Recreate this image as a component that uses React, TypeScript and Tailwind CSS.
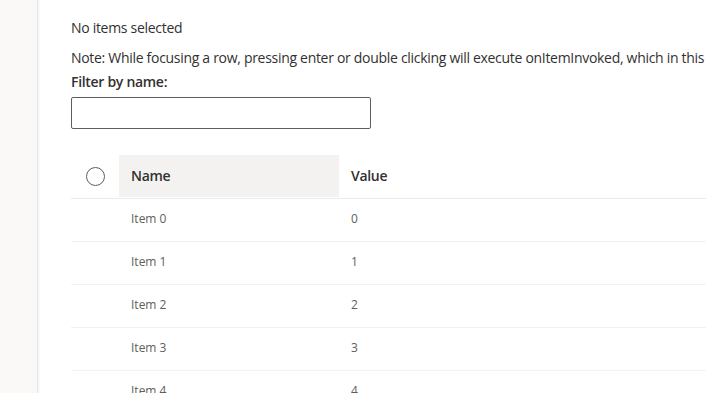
const items = [0, 1, 2, 3, 4].map((i) => ({ name: `Item ${i}`, value: i }));

export default function App() {
  return (
    <div
      className="flex h-[393px] w-[706px] overflow-hidden bg-white text-[#323130]"
      style={{ fontFamily: '"Segoe UI", "Open Sans", "Noto Sans", sans-serif' }}
    >
      {/* side rail */}
      <div className="w-[38px] shrink-0 bg-[#faf9f8] border-r border-[#e8e6e4] shadow-[1px_0_2px_rgba(0,0,0,0.06)]" />

      <div className="flex-1 min-w-0 pl-[33px] pt-[18px] tracking-[-0.3px]">
        <div className="text-[14px] leading-[20px]">No items selected</div>
        <div className="mt-[10px] text-[14px] leading-[20px] whitespace-nowrap">
          Note: While focusing a row, pressing enter or double clicking will execute onItemInvoked, which in this
          case will alert the item name.
        </div>
        <label className="block pt-[4px] pb-[5px] text-[14px] leading-[20px] font-semibold">
          Filter by name:
        </label>
        <input
          type="text"
          className="block h-[32px] w-[300px] border border-[#605e5c] rounded-[2px] px-2 text-[14px] outline-none"
        />

        <div className="mt-[26px] w-[900px]">
          {/* header */}
          <div className="flex h-[44px] border-b border-[#edebe9]">
            <div className="flex h-[42px] w-[48px] items-center justify-center">
              <div className="h-[19px] w-[19px] rounded-full border border-[#605e5c]" />
            </div>
            <div className="flex h-[42px] w-[220px] items-center bg-[#f3f2f1] px-3 pb-[2px] text-[14px] font-semibold">
              Name
            </div>
            <div className="flex h-[42px] items-center px-3 pb-[2px] text-[14px] font-semibold">Value</div>
          </div>

          {items.map((it) => (
            <div
              key={it.name}
              className="flex h-[43px] border-b border-[#f3f2f1] pb-[2px] text-[12px] tracking-normal text-[#605e5c]"
            >
              <div className="w-[48px]" />
              <div className="flex w-[220px] items-center px-3">{it.name}</div>
              <div className="flex items-center px-3">{it.value}</div>
            </div>
          ))}
        </div>
      </div>
    </div>
  );
}
